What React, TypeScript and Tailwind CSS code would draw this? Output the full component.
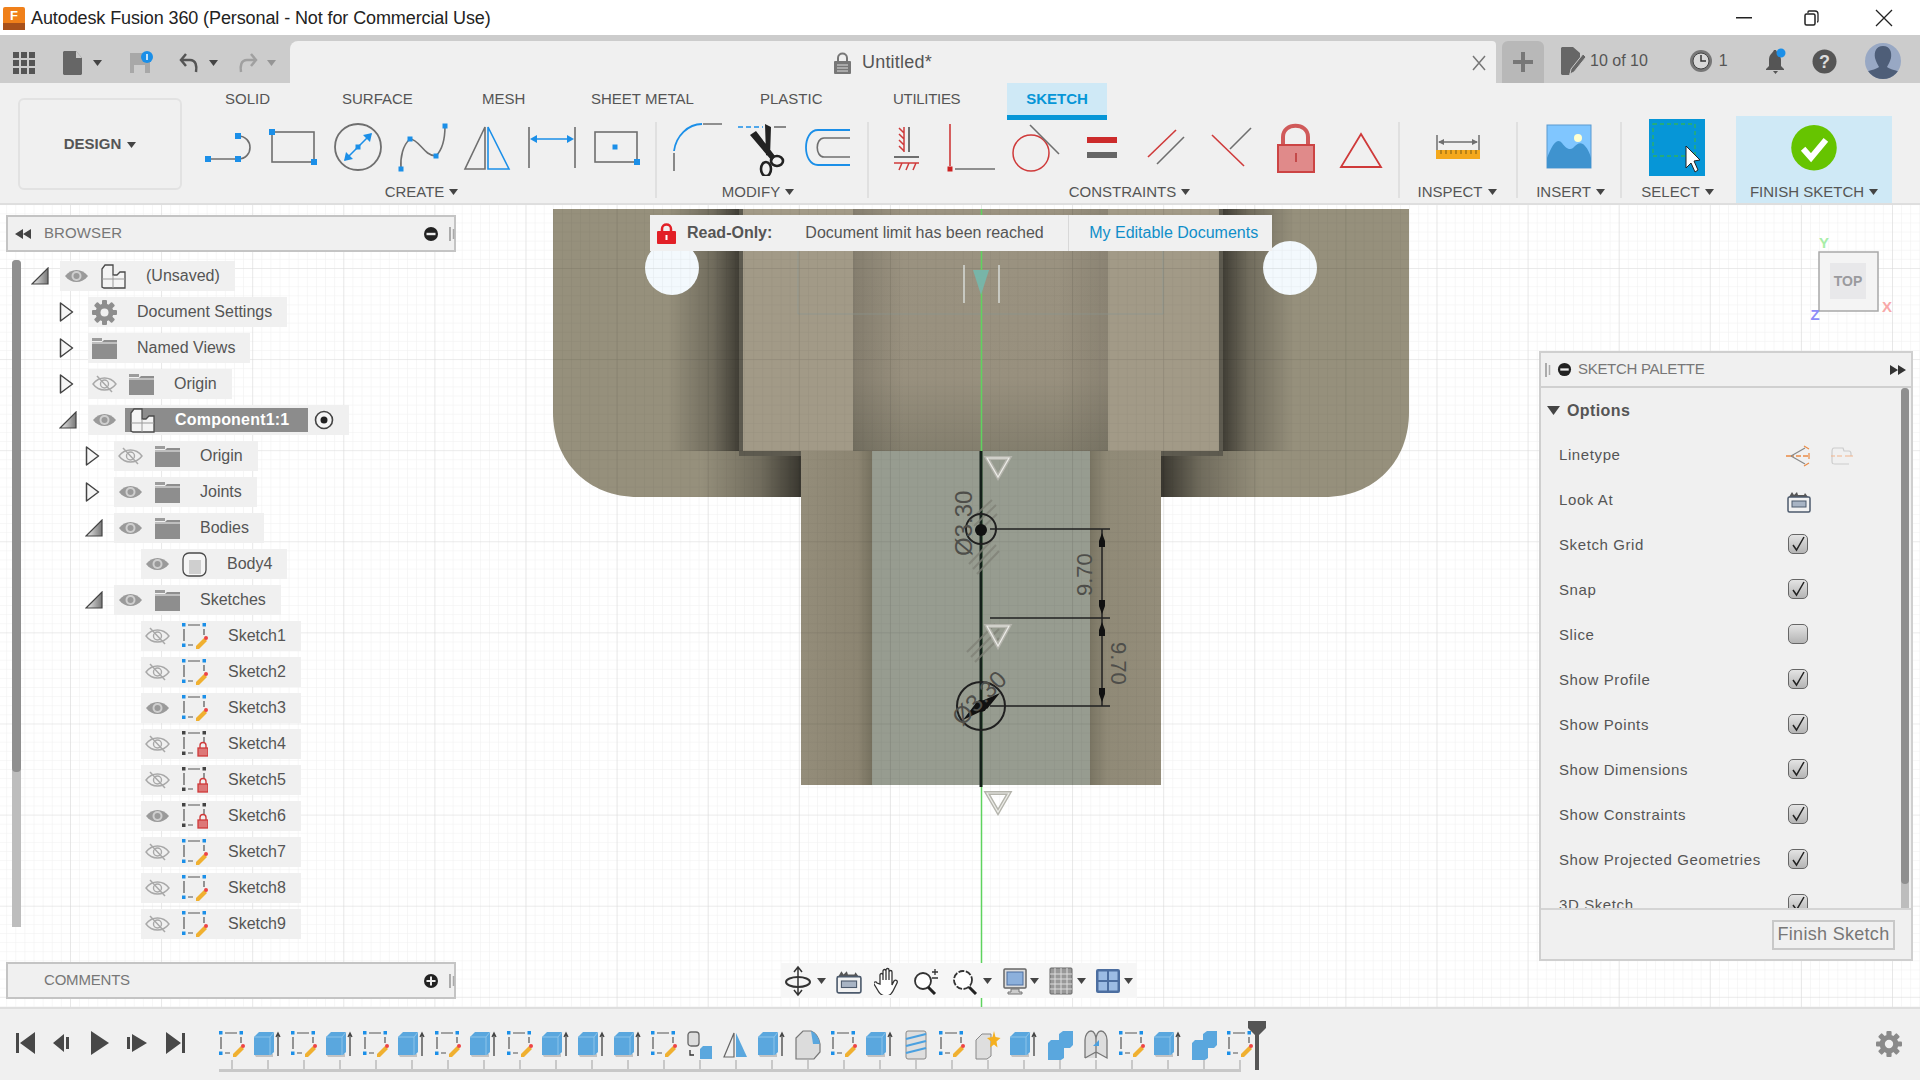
import type { ReactNode } from 'react';

const BLUE = '#0696d7';
const DOT = '#1b8fe8';
const RED = '#cf3a3a';
const GREY = '#6f6f6f';

function Caret({ className = '' }: { className?: string }) {
  return (
    <svg width="9" height="6" viewBox="0 0 9 6" className={`shrink-0 ${className}`}>
      <path d="M0 0h9L4.5 6z" fill="#444" />
    </svg>
  );
}

function Tool({ x, w = 65, children }: { x: number; w?: number; children: ReactNode }) {
  return (
    <svg viewBox={`${x} 116 ${w} 60`} width={w} height={60} className="shrink-0" fill="none">
      {children}
    </svg>
  );
}

function Pt({ x, y, s = 7, c = DOT }: { x: number; y: number; s?: number; c?: string }) {
  return <rect x={x - s / 2} y={y - s / 2} width={s} height={s} fill={c} />;
}

function Group({
  w,
  pl,
  label,
  lbl = 'pr-[8px]',
  children,
}: {
  w: string;
  pl: string;
  label: string;
  lbl?: string;
  children: ReactNode;
}) {
  return (
    <div className={`flex shrink-0 flex-col ${w}`}>
      <div className={`flex h-[60px] ${pl}`}>{children}</div>
      <div className={`flex h-[29px] items-center justify-center gap-[5px] pt-[5px] text-[15px] text-[#555] ${lbl}`}>
        {label}
        <Caret />
      </div>
    </div>
  );
}

function Sep() {
  return <div className="mt-[6px] h-[76px] w-[2px] shrink-0 bg-[#e0e0e0]" />;
}

function Eye({ off = false }: { off?: boolean }) {
  const c = off ? '#a8a8a8' : '#9a9a9a';
  return (
    <svg width="25" height="18" viewBox="0 0 25 18" className="shrink-0">
      {off ? (
        <>
          <path d="M1 9c6-8 17-8 23 0-6 8-17 8-23 0z" fill="none" stroke={c} strokeWidth="1.4" />
          <circle cx="12.5" cy="9" r="4" fill="none" stroke={c} strokeWidth="1.4" />
          <path d="M5 1l15 16" stroke={c} strokeWidth="1.5" />
        </>
      ) : (
        <>
          <path d="M1 9c6-8 17-8 23 0-6 8-17 8-23 0z" fill={c} />
          <circle cx="12.5" cy="9" r="5" fill="#cfcfcf" />
          <circle cx="12.5" cy="9" r="3" fill={c} />
        </>
      )}
    </svg>
  );
}

function Folder() {
  return (
    <svg width="25" height="21" viewBox="0 0 25 21" className="shrink-0">
      <path d="M0 0h10v3H0z" fill="#9c9c9c" />
      <path d="M0 4h10l2-2h13v19H0z" fill="#8e8e8e" />
      <path d="M0 5h25" stroke="#f0f0f0" strokeWidth="1" />
    </svg>
  );
}

function CompIcon() {
  return (
    <svg width="25" height="25" viewBox="0 0 25 25" className="shrink-0">
      <path d="M1 5l3-4h8v10h4l3-3h5v16H3l-2-1z" fill="#f4f4f4" stroke="#4a4a4a" strokeWidth="1.3" />
      <path d="M1 15h11v9M12 11v4M12 15h12" fill="none" stroke="#9a9a9a" strokeWidth="1" />
    </svg>
  );
}

function BodyIcon() {
  return (
    <svg width="25" height="25" viewBox="0 0 25 25" className="shrink-0">
      <rect x="1" y="1" width="23" height="23" rx="6" fill="#f5f5f5" stroke="#4a4a4a" strokeWidth="1.3" />
      <rect x="7" y="8" width="12" height="14" fill="#cfcfcf" />
    </svg>
  );
}

function Gear({ size = 25, color = '#8e8e8e' }: { size?: number; color?: string }) {
  const teeth = [0, 45, 90, 135];
  return (
    <svg width={size} height={size} viewBox="0 0 25 25" className="shrink-0">
      {teeth.map((a) => (
        <rect key={a} x="10" y="0" width="5" height="25" rx="1" fill={color} transform={`rotate(${a} 12.5 12.5)`} />
      ))}
      <circle cx="12.5" cy="12.5" r="9" fill={color} />
      <circle cx="12.5" cy="12.5" r="4" fill="#f0f0f0" />
    </svg>
  );
}

function SketchIcon({ locked = false }: { locked?: boolean }) {
  const c = locked ? '#444' : DOT;
  return (
    <svg width="26" height="28" viewBox="0 0 26 28" className="shrink-0" fill="none">
      <path d="M6 3h12M2 7v12M22 7v6M6 23h5" stroke="#555" strokeWidth="1.2" />
      <rect x="0" y="1" width="3.5" height="3.5" fill={c} />
      <rect x="20.5" y="1" width="3.5" height="3.5" fill={c} />
      <rect x="0" y="21.5" width="3.5" height="3.5" fill={c} />
      {locked ? (
        <g>
          <path d="M18 18v-2.500a3 3 0 0 1 6 0V18" stroke={RED} strokeWidth="1.4" />
          <rect x="16" y="18" width="10" height="8" fill="#dd7777" stroke={RED} strokeWidth="1.3" />
        </g>
      ) : (
        <g>
          <path d="M14 24l8-8 3 3-8 8h-3z" fill="#f0b030" />
          <circle cx="24" cy="16" r="2" fill="#ee4444" />
        </g>
      )}
    </svg>
  );
}

function ExtrudeIcon() {
  return (
    <svg width="28" height="30" viewBox="0 0 28 30" className="shrink-0" fill="none">
      <path d="M0 24l2 3h17v-3z" fill="#c4c4c4" />
      <path d="M0 7l5-5h15v20l-3 3H0z" fill="#5aa7de" />
      <path d="M0 7h16v18M16 7l4-5" stroke="#8cc4ea" strokeWidth="1" />
      <path d="M24 26V4M22 7l2-4 2 4" stroke="#444" strokeWidth="1.3" />
    </svg>
  );
}

function CombineIcon() {
  return (
    <svg width="26" height="30" viewBox="0 0 26 30" className="shrink-0">
      <path d="M12 4l4-3h10v14l-3 3h-6v10l-3 2H1V13l3-3h8z" fill="#5aa7de" />
    </svg>
  );
}

type Step = 'sk' | 'ex' | 'joint' | 'mirror' | 'shape' | 'coil' | 'new' | 'comb' | 'loft';

function TimelineGlyph({ step }: { step: Step }) {
  if (step === 'sk') return <SketchIcon />;
  if (step === 'ex') return <ExtrudeIcon />;
  if (step === 'comb') return <CombineIcon />;
  if (step === 'joint')
    return (
      <svg width="26" height="30" viewBox="0 0 26 30" fill="none">
        <rect x="1" y="2" width="11" height="14" rx="3" fill="#ddd" stroke="#666" strokeWidth="1.3" />
        <path d="M3 20v5h4" stroke="#333" strokeWidth="1.3" />
        <path d="M13 19l3-3h9v13H13z" fill="#5aa7de" />
      </svg>
    );
  if (step === 'mirror')
    return (
      <svg width="26" height="30" viewBox="0 0 26 30" fill="none">
        <path d="M11 3L1 27h10z" stroke="#666" strokeWidth="1.2" fill="#f0f0f0" />
        <path d="M13 3l11 24H13z" fill="#5aa7de" />
      </svg>
    );
  if (step === 'shape')
    return (
      <svg width="26" height="30" viewBox="0 0 26 30">
        <path d="M1 8l7-7h8c5 2 8 7 9 13v8l-6 7H1z" fill="#dcdcdc" stroke="#777" strokeWidth="1.2" />
        <path d="M16 1c5 2 8 7 9 13h-7z" fill="#5aa7de" />
      </svg>
    );
  if (step === 'coil')
    return (
      <svg width="24" height="30" viewBox="0 0 24 30" fill="none">
        <rect x="2" y="1" width="20" height="28" rx="2" fill="#dedede" stroke="#888" />
        <path d="M2 9l20-5M2 16l20-5M2 23l20-5" stroke="#4aa0e0" strokeWidth="2.200" />
      </svg>
    );
  if (step === 'new')
    return (
      <svg width="26" height="30" viewBox="0 0 26 30">
        <path d="M1 10l6-6h9v22l-4 3H1z" fill="#dedede" stroke="#888" />
        <path d="M19 1l1.500 6 5 1-4 3.500 1 6-3.500-3-4 3 1-6-4-3.500 5.500-1z" fill="#f5b020" />
      </svg>
    );
  return (
    <svg width="26" height="30" viewBox="0 0 26 30" fill="none">
      <path d="M2 28V10c0-5 3-9 6-9s5 4 5 9v18M13 10c0-5 2-9 5-9s6 4 6 9v18l-11-6-11 6" fill="#ddd" stroke="#777" strokeWidth="1.3" />
      <path d="M10 16l6-6v6z" fill="#4aa0e0" />
    </svg>
  );
}

type Row = {
  level: 0 | 1 | 2 | 3;
  arrow?: 'open' | 'closed';
  eye?: 'on' | 'off';
  icon: 'comp' | 'folder' | 'gear' | 'body' | 'sketch' | 'lock';
  label: string;
  selected?: boolean;
};

const rows: Row[] = [
  { level: 0, arrow: 'open', eye: 'on', icon: 'comp', label: '(Unsaved)' },
  { level: 1, arrow: 'closed', icon: 'gear', label: 'Document Settings' },
  { level: 1, arrow: 'closed', icon: 'folder', label: 'Named Views' },
  { level: 1, arrow: 'closed', eye: 'off', icon: 'folder', label: 'Origin' },
  { level: 1, arrow: 'open', eye: 'on', icon: 'comp', label: 'Component1:1', selected: true },
  { level: 2, arrow: 'closed', eye: 'off', icon: 'folder', label: 'Origin' },
  { level: 2, arrow: 'closed', eye: 'on', icon: 'folder', label: 'Joints' },
  { level: 2, arrow: 'open', eye: 'on', icon: 'folder', label: 'Bodies' },
  { level: 3, eye: 'on', icon: 'body', label: 'Body4' },
  { level: 2, arrow: 'open', eye: 'on', icon: 'folder', label: 'Sketches' },
  { level: 3, eye: 'off', icon: 'sketch', label: 'Sketch1' },
  { level: 3, eye: 'off', icon: 'sketch', label: 'Sketch2' },
  { level: 3, eye: 'on', icon: 'sketch', label: 'Sketch3' },
  { level: 3, eye: 'off', icon: 'lock', label: 'Sketch4' },
  { level: 3, eye: 'off', icon: 'lock', label: 'Sketch5' },
  { level: 3, eye: 'on', icon: 'lock', label: 'Sketch6' },
  { level: 3, eye: 'off', icon: 'sketch', label: 'Sketch7' },
  { level: 3, eye: 'off', icon: 'sketch', label: 'Sketch8' },
  { level: 3, eye: 'off', icon: 'sketch', label: 'Sketch9' },
];

const indent = ['ml-0', 'ml-[28px]', 'ml-[54px]', 'ml-[81px]'];

function RowIcon({ icon }: { icon: Row['icon'] }) {
  if (icon === 'comp') return <CompIcon />;
  if (icon === 'folder') return <Folder />;
  if (icon === 'gear') return <Gear />;
  if (icon === 'body') return <BodyIcon />;
  return <SketchIcon locked={icon === 'lock'} />;
}

function Arrow({ kind }: { kind?: Row['arrow'] }) {
  return (
    <div className="flex w-[29px] shrink-0 items-center">
      {kind === 'open' && (
        <svg width="18" height="18" viewBox="0 0 18 18">
          <defs>
            <linearGradient id="tri" x1="0" x2="1" y1="0" y2="0">
              <stop offset="0" stopColor="#f0f0f0" />
              <stop offset="1" stopColor="#777" />
            </linearGradient>
          </defs>
          <path d="M1 17L17 1v16z" fill="url(#tri)" stroke="#444" strokeWidth="1.2" />
        </svg>
      )}
      {kind === 'closed' && (
        <svg width="15" height="20" viewBox="0 0 15 20">
          <path d="M1.500 1v18L13.500 10z" fill="#f6f6f6" stroke="#444" strokeWidth="1.5" strokeLinejoin="round" />
        </svg>
      )}
    </div>
  );
}

function TreeRow({ row }: { row: Row }) {
  return (
    <div className={`flex h-[36px] items-center ${indent[row.level]}`}>
      <Arrow kind={row.arrow} />
      <div className="flex h-[30px] items-center bg-[#f0f0f0] pl-[4px] pr-[15px] text-[16px] text-[#555]">
        {row.eye && (
          <div className="mr-[8px] shrink-0">
            <Eye off={row.eye === 'off'} />
          </div>
        )}
        {row.selected ? (
          <>
            <div className="flex h-[24px] w-[183px] items-center bg-[#8c8c8c] pl-[5px] font-bold tracking-[0.2px] text-white">
              <CompIcon />
              <span className="ml-[20px]">{row.label}</span>
            </div>
            <svg width="20" height="20" viewBox="0 0 20 20" className="ml-[6px]">
              <circle cx="10" cy="10" r="8.500" fill="#f5f5f5" stroke="#444" strokeWidth="1.6" />
              <circle cx="10" cy="10" r="3.500" fill="#222" />
            </svg>
          </>
        ) : (
          <>
            <div className={row.eye ? 'ml-[4px]' : ''}>
              <RowIcon icon={row.icon} />
            </div>
            <span className="ml-[20px] whitespace-nowrap">{row.label}</span>
          </>
        )}
      </div>
    </div>
  );
}

function Check({ on = true }: { on?: boolean }) {
  return (
    <div className="mb-[4px] flex h-[20px] w-[20px] items-center justify-center rounded-[5px] border border-[#666] bg-[linear-gradient(#e4e4e4,#b4b4b4)]">
      {on && (
        <svg width="15" height="16" viewBox="0 0 15 16" fill="none">
          <path d="M2 9l3.500 5L13 1" stroke="#222" strokeWidth="1.500" />
        </svg>
      )}
    </div>
  );
}

const options: { label: string; on?: boolean }[] = [
  { label: 'Sketch Grid', on: true },
  { label: 'Snap', on: true },
  { label: 'Slice', on: false },
  { label: 'Show Profile', on: true },
  { label: 'Show Points', on: true },
  { label: 'Show Dimensions', on: true },
  { label: 'Show Constraints', on: true },
  { label: 'Show Projected Geometries', on: true },
  { label: '3D Sketch', on: true },
];

function PaletteRow({ label, children }: { label: string; children: ReactNode }) {
  return (
    <div className="flex h-[45px] shrink-0 items-center pl-[18px]">
      <div className="w-[229px] text-[15px] tracking-[0.6px] text-[#555]">{label}</div>
      {children}
    </div>
  );
}

function LookAt({ size = 24 }: { size?: number }) {
  return (
    <svg width={size} height={size} viewBox="0 0 24 24" fill="none" className="shrink-0">
      <path d="M2 8l3-5 2 3 3-3 1 3h6l1-2 3 4" fill="#555" />
      <rect x="1" y="8" width="22" height="15" rx="1.500" fill="#f2f2f2" stroke="#4c5a6c" strokeWidth="1.500" />
      <rect x="5" y="12" width="14" height="6" fill="#a8b4c4" stroke="#4c5a6c" />
    </svg>
  );
}

function Canvas() {
  return (
    <svg viewBox="0 205 1920 802" className="absolute inset-0 h-full w-full bg-white">
      <defs>
        <pattern id="minor" x="70" y="268" width="9.11" height="9.11" patternUnits="userSpaceOnUse">
          <path d="M0 0H9.110M0 0V9.110" stroke="rgba(0,0,0,0.06)" strokeWidth="1" fill="none" />
        </pattern>
        <pattern id="major" x="70" y="268" width="91.100" height="91.100" patternUnits="userSpaceOnUse">
          <path d="M0 0H91.100M0 0V91.100" stroke="rgba(0,0,0,0.1)" strokeWidth="1.200" fill="none" />
        </pattern>
        <linearGradient id="toDark" x1="0" x2="1" y1="0" y2="0">
          <stop offset="0" stopColor="#000" stopOpacity="0" />
          <stop offset="0.6" stopColor="#000" stopOpacity="0.25" />
          <stop offset="1" stopColor="#000" stopOpacity="0.62" />
        </linearGradient>
        <linearGradient id="fromDark" x1="0" x2="1" y1="0" y2="0">
          <stop offset="0" stopColor="#000" stopOpacity="0.62" />
          <stop offset="0.4" stopColor="#000" stopOpacity="0.25" />
          <stop offset="1" stopColor="#000" stopOpacity="0" />
        </linearGradient>
        <linearGradient id="mid" x1="0" x2="0" y1="0" y2="1">
          <stop offset="0" stopColor="#9b9381" />
          <stop offset="0.7" stopColor="#98907e" />
          <stop offset="1" stopColor="#837e6d" />
        </linearGradient>
        <linearGradient id="midX" x1="0" x2="1" y1="0" y2="0">
          <stop offset="0" stopColor="#000" stopOpacity="0.14" />
          <stop offset="0.2" stopColor="#000" stopOpacity="0" />
          <stop offset="0.8" stopColor="#000" stopOpacity="0" />
          <stop offset="1" stopColor="#000" stopOpacity="0.1" />
        </linearGradient>
        <linearGradient id="lowL" x1="0" x2="1" y1="0" y2="0">
          <stop offset="0" stopColor="#948d7a" />
          <stop offset="0.8" stopColor="#8c8572" />
          <stop offset="1" stopColor="#76715f" />
        </linearGradient>
        <linearGradient id="lowR" x1="0" x2="1" y1="0" y2="0">
          <stop offset="0" stopColor="#7a7563" />
          <stop offset="0.25" stopColor="#908a77" />
          <stop offset="1" stopColor="#948d7a" />
        </linearGradient>
        <clipPath id="plate">
          <path d="M553 209H1409V412c0 50-35 85-85 85H638c-50 0-85-35-85-85z" />
        </clipPath>
      </defs>

      <rect x="0" y="205" width="1920" height="802" fill="#fff" />
      <g clipPath="url(#plate)">
        <rect x="553" y="209" width="856" height="288" fill="#96907c" />
        <rect x="668" y="209" width="75" height="242" fill="url(#toDark)" />
        <rect x="1219" y="209" width="75" height="242" fill="url(#fromDark)" />
        <rect x="700" y="451" width="101" height="46" fill="url(#toDark)" />
        <rect x="1161" y="451" width="101" height="46" fill="url(#fromDark)" />
      </g>
      <circle cx="672" cy="268" r="27" fill="#f3f9fd" />
      <circle cx="1290" cy="268" r="27" fill="#f3f9fd" />

      <rect x="739" y="209" width="484" height="247" fill="#5d5a4f" />
      <rect x="743" y="209" width="476" height="242" fill="#a29a87" />
      <rect x="853" y="209" width="255" height="242" fill="url(#mid)" />
      <rect x="853" y="209" width="255" height="242" fill="url(#midX)" />
      <path d="M798 314H1163M798 314V250M1163 314V250" stroke="#8e9b95" strokeWidth="1" fill="none" opacity="0.7" />

      <rect x="801" y="451" width="71" height="334" fill="url(#lowL)" />
      <rect x="1090" y="451" width="71" height="334" fill="url(#lowR)" />
      <rect x="872" y="451" width="218" height="334" fill="#979c90" />

      <rect x="0" y="205" width="1920" height="802" fill="url(#minor)" />
      <rect x="0" y="205" width="1920" height="802" fill="url(#major)" />

      <path d="M981.500 209V1007" stroke="#5fd35f" strokeWidth="1.500" />
      <path d="M964 265V303M999 265V303" stroke="#d8dcd8" strokeWidth="1.500" />
      <path d="M973 270H989L981 295z" fill="#78b5a8" />

      <path d="M981 451V787" stroke="#14201a" strokeWidth="3" />

      <g stroke="#7f8076" strokeWidth="2" fill="none" opacity="0.75">
        <path d="M970 520l22-20M974 526l22-21M978 532l19-18M969 564l23-24M973 569l23-24M977 574l22-23" />
        <path d="M967 652l28-28M971 657l28-28M975 662l24-24" />
      </g>

      <g stroke="#202020" fill="none">
        <circle cx="981" cy="529" r="15" strokeWidth="2" />
        <circle cx="981" cy="706" r="24" strokeWidth="2" />
        <path d="M990 529H1110M990 618H1110M990 706H1110M1102 529V706" strokeWidth="1.500" />
      </g>
      <circle cx="981" cy="530" r="6" fill="#111" />
      <circle cx="981" cy="706" r="6" fill="#111" />
      <path d="M963 720L976 703 986 709zM1000 693L987 709 977 703z" fill="#111" />
      <g fill="#111">
        <path d="M1102 533l-3 8v6h6v-6z" />
        <path d="M1102 614l-3-8v-6h6v6z" />
        <path d="M1102 622l-3 8v6h6v-6z" />
        <path d="M1102 702l-3-8v-6h6v6z" />
      </g>

      <g stroke="#b4b4ac" strokeWidth="4" fill="none">
        <path d="M987 458H1009L998 477z" />
        <path d="M987 626H1009L998 646z" />
        <path d="M987 793H1009L998 812z" />
      </g>
      <g stroke="#ecece8" strokeWidth="1.200" fill="none">
        <path d="M987 458H1009L998 477z" />
        <path d="M987 626H1009L998 646z" />
        <path d="M987 793H1009L998 812z" />
      </g>

      <g fill="#4e4e4a" fontSize="22" fontFamily="'Liberation Sans', sans-serif">
        <text transform="translate(1092 596) rotate(-90)">9.70</text>
        <text transform="translate(1111 642) rotate(90)">9.70</text>
        <text fontSize="24" transform="translate(972 556) rotate(-90)">Ø3.30</text>
        <text fontSize="24" transform="translate(962 727) rotate(-45)">Ø3.30</text>
      </g>

      <rect x="1819" y="252" width="59" height="59" fill="#f4f4f4" stroke="#a8a8a8" strokeWidth="1.500" />
      <rect x="1830" y="263" width="36" height="36" fill="#e8e8ea" />
      <text x="1848" y="286" textAnchor="middle" fontSize="14" fontWeight="700" fill="#9a9a9e" fontFamily="'Liberation Sans', sans-serif">TOP</text>
      <text x="1824" y="248" textAnchor="middle" fontSize="15" fontWeight="700" fill="#a8eea8" fontFamily="'Liberation Sans', sans-serif">Y</text>
      <text x="1887" y="312" textAnchor="middle" fontSize="15" fontWeight="700" fill="#f8a8a8" fontFamily="'Liberation Sans', sans-serif">X</text>
      <text x="1815" y="320" textAnchor="middle" fontSize="15" fontWeight="700" fill="#8c8cf8" fontFamily="'Liberation Sans', sans-serif">Z</text>
    </svg>
  );
}

function PanelHandle({ className = '' }: { className?: string }) {
  return (
    <svg width="8" height="16" viewBox="0 0 8 16" className={`shrink-0 ${className}`}>
      <path d="M2 1V15" stroke="#666" strokeWidth="1" />
      <path d="M5.500 3V13" stroke="#aaa" strokeWidth="1.500" />
    </svg>
  );
}

function Browser() {
  return (
    <div className="absolute left-[6px] top-[10px] w-[450px]">
      <div className="flex h-[37px] items-center border-2 border-[#c4c4c4] bg-[#f0f0f0] pl-[7px] text-[15px] tracking-[0.1px] text-[#777]">
        <svg width="16" height="10" viewBox="0 0 16 10" className="mr-[13px]">
          <path d="M0 5l8-5v10zM8 5l8-5v10z" fill="#444" />
        </svg>
        BROWSER
        <svg width="16" height="16" viewBox="0 0 16 16" className="ml-auto mr-[9px]">
          <circle cx="8" cy="8" r="7" fill="#222" />
          <rect x="3.500" y="6.800" width="9" height="2.400" fill="#eee" />
        </svg>
        <PanelHandle className="-mr-[2px]" />
      </div>
      <div className="relative mt-[6px] pl-[25px]">
        <div className="absolute left-[6px] top-[2px] h-[667px] w-[9px] rounded-t-[4px] bg-[#bdbdbd]">
          <div className="h-[512px] w-full rounded-[4px] bg-[#8f8f8f]" />
        </div>
        {rows.map((r) => (
          <TreeRow key={r.label + r.level + r.eye} row={r} />
        ))}
      </div>
    </div>
  );
}

function Comments() {
  return (
    <div className="absolute left-[6px] top-[757px] flex h-[37px] w-[450px] items-center border-2 border-[#c4c4c4] bg-[#f0f0f0] pl-[36px] text-[15px] tracking-[-0.2px] text-[#777]">
      COMMENTS
      <svg width="16" height="16" viewBox="0 0 16 16" className="ml-auto mr-[9px]">
        <circle cx="8" cy="8" r="7" fill="#222" />
        <path d="M3.500 8h9M8 3.500v9" stroke="#eee" strokeWidth="2" />
      </svg>
      <PanelHandle className="-mr-[2px]" />
    </div>
  );
}

function Palette() {
  return (
    <div className="absolute left-[1539px] top-[146px] flex h-[610px] w-[374px] flex-col border-2 border-[#cfcfcf] bg-[#f0f0f0]">
      <div className="flex h-[35px] shrink-0 items-center border-b-2 border-[#d0d0d0] pl-[3px] pr-[5px] text-[15px] tracking-[-0.3px] text-[#777]">
        <PanelHandle />
        <svg width="15" height="15" viewBox="0 0 16 16" className="ml-[5px] mr-[6px]">
          <circle cx="8" cy="8" r="7" fill="#222" />
          <rect x="3.500" y="6.800" width="9" height="2.400" fill="#eee" />
        </svg>
        SKETCH PALETTE
        <svg width="16" height="10" viewBox="0 0 16 10" className="ml-auto">
          <path d="M0 0l8 5-8 5zM8 0l8 5-8 5z" fill="#333" />
        </svg>
      </div>
      <div className="relative flex h-[520px] shrink-0 flex-col overflow-hidden">
        <div className="flex h-[45px] shrink-0 items-center gap-[7px] pl-[6px] text-[16px] font-bold tracking-[0.4px] text-[#555]">
          <svg width="13" height="9" viewBox="0 0 13 9">
            <path d="M0 0h13L6.500 9z" fill="#444" />
          </svg>
          Options
        </div>
        <PaletteRow label="Linetype">
          <svg width="80" height="26" viewBox="0 0 80 24" fill="none" className="-ml-[3px]">
            <path d="M1 12h8M11 12h5M18 12h5" stroke="#ea8a45" strokeWidth="1.500" />
            <path d="M6 12L20 4M6 12l14 8" stroke="#888" strokeWidth="1.200" />
            <path d="M19 2l5 3M19 22l5-3M24 9v6" stroke="#ea8a45" strokeWidth="1.200" />
            <path d="M49 4h9l1 3h5c2 0 2 1 2 3v2M49 4c-2 0-2 2-2 4v9c0 3 1 3 3 3h14" stroke="#ccc" strokeWidth="1.200" />
            <path d="M46 12h4M52 12h5M60 12h8" stroke="#f2b48c" strokeWidth="1.200" />
          </svg>
        </PaletteRow>
        <PaletteRow label="Look At">
          <div className="-ml-[1px]">
            <LookAt />
          </div>
        </PaletteRow>
        {options.map((o) => (
          <PaletteRow key={o.label} label={o.label}>
            <Check on={o.on} />
          </PaletteRow>
        ))}
        <div className="absolute right-[2px] top-0 h-full w-[8px] rounded-t-[4px] bg-[#bdbdbd]">
          <div className="h-[496px] w-full rounded-[4px] bg-[#8f8f8f]" />
        </div>
      </div>
      <div className="flex flex-1 items-center justify-end border-t-2 border-[#d4d4d4] pr-[16px]">
        <div className="flex h-[30px] w-[123px] items-center justify-center border-2 border-[#c8c8c8] text-[18px] tracking-[0.3px] text-[#777]">
          Finish Sketch
        </div>
      </div>
    </div>
  );
}

function NavBar() {
  return (
    <div className="absolute left-[781px] top-[758px] flex h-[35px] w-[356px] items-center bg-[#f6f6f6] pl-[5px]">
      <svg width="28" height="32" viewBox="0 0 28 32" fill="none" className="ml-[-2px]">
        <path d="M14 2v28M10 7l4-5 4 5M10 25l4 5 4-5" stroke="#333" strokeWidth="1.500" />
        <ellipse cx="14" cy="17" rx="12" ry="5" stroke="#333" strokeWidth="2" />
      </svg>
      <Caret className="ml-[5px]" />
      <div className="ml-[10px]">
        <LookAt size={26} />
      </div>
      <svg width="26" height="28" viewBox="0 0 26 28" fill="none" className="ml-[12px]">
        <path d="M6 17V8c0-2 3-2 3 0v5-9c0-2 3-2 3 0v9-10c0-2 3-2 3 0v10-8c0-2 3-2 3 0v13l2-4c2-2 4 0 3 2l-4 8c-2 4-4 5-7 5-5 0-7-3-9-7l-3-5c-1-2 2-3 3-1z" fill="#fff" stroke="#333" strokeWidth="1.300" />
      </svg>
      <svg width="26" height="28" viewBox="0 0 26 28" fill="none" className="ml-[13px]">
        <circle cx="10" cy="14" r="8" fill="#fff" stroke="#333" strokeWidth="1.800" />
        <path d="M15 20l7 7" stroke="#222" strokeWidth="3" />
        <path d="M19 5h6M22 2v6M19 11h6" stroke="#333" strokeWidth="1.300" />
      </svg>
      <svg width="26" height="28" viewBox="0 0 26 28" fill="none" className="ml-[13px]">
        <circle cx="11" cy="13" r="9" fill="#fff" stroke="#333" strokeWidth="1.800" strokeDasharray="6 1.500" />
        <path d="M17 20l7 7" stroke="#222" strokeWidth="3" />
      </svg>
      <Caret className="ml-[5px]" />
      <svg width="24" height="28" viewBox="0 0 24 28" fill="none" className="ml-[11px]">
        <rect x="1" y="2" width="22" height="19" rx="1" fill="#ddd" stroke="#666" strokeWidth="1.500" />
        <rect x="4" y="5" width="16" height="13" fill="#8cb0dc" stroke="#4c6ea0" />
        <path d="M8 22h8v3h3v2H5v-2h3z" fill="#ccc" stroke="#777" />
      </svg>
      <Caret className="ml-[3px]" />
      <svg width="24" height="28" viewBox="0 0 24 28" fill="none" className="ml-[10px]">
        <rect x="1" y="1" width="22" height="26" rx="1" fill="#999" stroke="#666" />
        <path d="M1 7h22M1 12h22M1 17h22M1 22h22M6 1v26M12 1v26M18 1v26" stroke="#ddd" strokeWidth="1" />
      </svg>
      <Caret className="ml-[4px]" />
      <svg width="24" height="24" viewBox="0 0 24 24" className="ml-[10px]">
        <rect x="0" y="0" width="24" height="24" rx="2" fill="#4c6ea0" />
        <rect x="2.500" y="2.500" width="8.500" height="8.500" fill="#9cbce4" />
        <rect x="13" y="2.500" width="8.500" height="8.500" fill="#9cbce4" />
        <rect x="2.500" y="13" width="8.500" height="8.500" fill="#9cbce4" />
        <rect x="13" y="13" width="8.500" height="8.500" fill="#9cbce4" />
      </svg>
      <Caret className="ml-[4px]" />
    </div>
  );
}

const steps: Step[] = [
  'sk', 'ex', 'sk', 'ex', 'sk', 'ex', 'sk', 'ex', 'sk', 'ex', 'ex', 'ex', 'sk', 'joint', 'mirror',
  'ex', 'shape', 'sk', 'ex', 'coil', 'sk', 'new', 'ex', 'comb', 'loft', 'sk', 'ex', 'comb', 'sk',
];

function Timeline() {
  return (
    <div className="relative flex h-[73px] shrink-0 border-t-2 border-[#dedede] bg-[#f0f0f0]">
      <div className="flex h-full w-[214px] shrink-0 items-center pb-[2px] pl-[16px]">
        <svg width="170" height="24" viewBox="0 0 170 24" className="-mt-[2px]">
          <path d="M0 2h3v20H0zM19 1v22L4 12z" fill="#484848" />
          <path d="M37 12l11-9v18zM50 6h3v12h-3z" fill="#484848" />
          <path d="M75 0l18 12-18 12z" fill="#484848" />
          <path d="M111 6h3v12h-3zM116 3l15 9-15 9z" fill="#484848" />
          <path d="M150 1l15 11-15 11zM166 2h3v20h-3z" fill="#484848" />
        </svg>
      </div>
      <div className="flex w-[1044px] shrink-0 flex-col pt-[21px]">
        <div className="flex">
          {steps.map((s, i) => (
            <div key={i} className="flex w-[36px] shrink-0 flex-col items-center">
              <div className="flex h-[30px] items-start">
                <TimelineGlyph step={s} />
              </div>
              <div className="h-[9px] w-[2px] bg-[#c8c8c8]" />
            </div>
          ))}
        </div>
        <div className="ml-[5px] h-[3px] w-[1022px] bg-[#c8c8c8]" />
      </div>
      <svg width="20" height="50" viewBox="0 0 20 50" className="absolute left-[1247px] top-[12px]">
        <path d="M1 0h18v7l-7 7v35H8V14L1 7z" fill="#555" />
      </svg>
      <div className="ml-auto mr-[18px] flex items-center pb-[2px]">
        <Gear size={26} color="#8a8a8a" />
      </div>
    </div>
  );
}

function Ribbon() {
  const tabs = [
    ['SOLID', 'w-[117px]'],
    ['SURFACE', 'w-[140px]'],
    ['MESH', 'w-[109px]'],
    ['SHEET METAL', 'w-[169px]'],
    ['PLASTIC', 'w-[133px]'],
    ['UTILITIES', 'w-[114px] tracking-[-0.3px]'],
  ];
  return (
    <div className="flex h-[122px] shrink-0 border-b-2 border-[#dedede] bg-[#f0f0f0]">
      <div className="w-[196px] shrink-0 pl-[18px] pt-[15px]">
        <div className="flex h-[92px] w-[164px] items-center justify-center gap-[6px] rounded-[6px] border-2 border-[#e2e2e2] pt-[1px] text-[15px] font-bold text-[#555]">
          DESIGN
          <Caret />
        </div>
      </div>
      <div className="flex min-w-0 flex-1 flex-col">
        <div className="flex h-[33px] shrink-0 pl-[29px] text-[15px] text-[#555]">
          {tabs.map(([t, w]) => (
            <div key={t} className={`${w} pt-[5px]`}>
              {t}
            </div>
          ))}
          <div className="flex h-[37px] w-[100px] items-center justify-center border-b-[5px] border-[#0696d7] bg-[#cfe9f6] font-bold text-[#0696d7]">
            SKETCH
          </div>
        </div>
        <div className="flex h-[87px] shrink-0">
          <Group w="w-[459px]" pl="pl-0" label="CREATE">
            <Tool x={196}>
              <path d="M208 159H238M238 136c16 0 16 23 0 23" stroke={GREY} strokeWidth="1.600" />
              <Pt x={208} y={159} s={6} />
              <Pt x={238} y={159} s={6} />
              <Pt x={238} y={136} s={6} />
            </Tool>
            <Tool x={261}>
              <rect x="272" y="132" width="42" height="30" stroke={GREY} strokeWidth="1.600" />
              <Pt x={272} y={132} s={6} />
              <Pt x={314} y={162} s={6} />
            </Tool>
            <Tool x={326}>
              <circle cx="358" cy="147" r="23" stroke={GREY} strokeWidth="1.800" />
              <path d="M345 160L371 134" stroke={DOT} strokeWidth="1.600" />
              <path d="M344 161l9-2-7-7zM372 133l-9 2 7 7z" fill={DOT} />
              <Pt x={358} y={147} s={5} />
            </Tool>
            <Tool x={391}>
              <path d="M401 169c-1-12 2-24 9-30 9 0 14 17 26 17 6-6 9-18 9-30" stroke={GREY} strokeWidth="1.600" />
              <Pt x={401} y={169} s={5} />
              <Pt x={410} y={139} s={5} />
              <Pt x={436} y={156} s={5} />
              <Pt x={445} y={126} s={5} />
            </Tool>
            <Tool x={456}>
              <path d="M485 127L465 169H485z" stroke={GREY} strokeWidth="1.600" />
              <path d="M488 127L509 169H488z" stroke={DOT} strokeWidth="1.600" />
            </Tool>
            <Tool x={521}>
              <path d="M529 127V168M575 127V168" stroke={GREY} strokeWidth="1.600" />
              <path d="M533 139H571" stroke={DOT} strokeWidth="1.500" />
              <path d="M530 139l7-4v8zM574 139l-7-4v8z" fill={DOT} />
            </Tool>
            <Tool x={586}>
              <rect x="595" y="132" width="42" height="30" stroke={GREY} strokeWidth="1.600" />
              <Pt x={615} y={147} s={5} />
              <Pt x={637} y={162} s={6} />
            </Tool>
          </Group>
          <Sep />
          <Group w="w-[210px]" pl="pl-[8px]" label="MODIFY">
            <Tool x={665}>
              <path d="M674 151c2-15 14-27 28-27" stroke={DOT} strokeWidth="1.800" />
              <path d="M703 124H722M674 153V171" stroke={GREY} strokeWidth="1.600" />
            </Tool>
            <Tool x={730}>
              <path d="M738 127H763" stroke={DOT} strokeWidth="1.500" strokeDasharray="5 3" />
              <path d="M774 127H786" stroke={GREY} strokeWidth="1.600" />
              <path d="M765 124l6 3-1 30-4-2zM750 135l6-4 19 25-3 5z" fill="#222" />
              <ellipse cx="766" cy="169" rx="5" ry="7" stroke="#222" strokeWidth="2.600" />
              <ellipse cx="777" cy="161" rx="6" ry="5" stroke="#222" strokeWidth="2.600" />
            </Tool>
            <Tool x={795}>
              <path d="M850 130H818c-16 0-16 35 0 35H850" stroke={DOT} strokeWidth="1.800" />
              <path d="M850 138H824c-9 0-9 19 0 19H850" stroke={GREY} strokeWidth="1.600" />
            </Tool>
          </Group>
          <Sep />
          <Group w="w-[529px]" pl="pl-[5px]" label="CONSTRAINTS">
            <Tool x={874}>
              <path d="M909 127V152M894 157H919" stroke={GREY} strokeWidth="2" />
              <path d="M904 127V152M899 128l5 5M899 134l5 5M899 140l5 5M899 146l5 5" stroke={RED} strokeWidth="1.500" />
              <path d="M894 163H919M899 170l3-7M906 170l3-7M913 170l3-7" stroke={RED} strokeWidth="1.500" />
            </Tool>
            <Tool x={939}>
              <path d="M950 124V166" stroke={RED} strokeWidth="1.600" />
              <Pt x={950} y={169} s={5} c="#cc2222" />
              <path d="M955 169H995" stroke={GREY} strokeWidth="1.600" />
            </Tool>
            <Tool x={1003}>
              <circle cx="1030" cy="153" r="18" stroke={RED} strokeWidth="1.500" />
              <path d="M1029 125L1058 154" stroke={GREY} strokeWidth="1.600" />
            </Tool>
            <Tool x={1068}>
              <rect x="1086" y="137" width="30" height="6" fill="#cc2b2b" />
              <rect x="1086" y="152" width="30" height="6" fill="#666" />
            </Tool>
            <Tool x={1133}>
              <path d="M1147 157L1175 130" stroke={RED} strokeWidth="1.600" />
              <path d="M1156 164L1183 137" stroke={GREY} strokeWidth="1.600" />
            </Tool>
            <Tool x={1197}>
              <path d="M1210 135L1242 166" stroke={RED} strokeWidth="1.600" />
              <path d="M1228 149L1249 128" stroke={GREY} strokeWidth="1.600" />
            </Tool>
            <Tool x={1262}>
              <path d="M1281 145V137c0-15 25-15 25 0v8" stroke="#d05a5a" strokeWidth="4" />
              <rect x="1276" y="145" width="36" height="27" fill="#e08a8a" stroke="#cc4444" strokeWidth="2" />
              <path d="M1294 153V162" stroke="#b33" strokeWidth="1.500" />
            </Tool>
            <Tool x={1326}>
              <path d="M1358 134L1378 167H1338z" stroke={RED} strokeWidth="1.800" />
            </Tool>
          </Group>
          <Sep />
          <Group w="w-[116px]" pl="pl-[28px]" label="INSPECT" lbl="pr-[2px]">
            <Tool x={1428} w={60}>
              <path d="M1437 135V150M1479 135V150" stroke={GREY} strokeWidth="1.500" />
              <path d="M1439 142H1477" stroke={GREY} strokeWidth="1.300" />
              <path d="M1438 142l6-3v6zM1478 142l-6-3v6z" fill={GREY} />
              <rect x="1436" y="150" width="44" height="9" fill="#f4a81c" />
              <path d="M1441 150v4M1446 150v4M1451 150v4M1456 150v4M1461 150v4M1466 150v4M1471 150v4M1476 150v4" stroke="#7a5a10" strokeWidth="1" />
            </Tool>
          </Group>
          <Sep />
          <Group w="w-[102px]" pl="pl-[21px]" label="INSERT" lbl="pl-[3px]">
            <Tool x={1539} w={60}>
              <rect x="1547" y="125" width="44" height="43" fill="#80c6ff" stroke="#5a9ad0" strokeWidth="1" />
              <path d="M1547 158c6-16 11-20 15-15 3 4 7 8 11 5 5-6 9-6 12-2 3 3 5 8 6 12v10h-44z" fill="#3f93cf" />
              <circle cx="1578" cy="138" r="4" fill="#ffffd0" />
            </Tool>
          </Group>
          <Sep />
          <Group w="w-[114px]" pl="pl-[27px]" label="SELECT" lbl="pr-[3px]">
            <Tool x={1649} w={60}>
              <rect x="1649" y="119" width="56" height="57" fill={BLUE} />
              <rect x="1653" y="124" width="42" height="32" stroke="#2fb35f" strokeWidth="1.300" strokeDasharray="4 3" />
              <path d="M1686 146V168L1691 163L1695 172L1698 170L1694 161L1700 160z" fill="#fff" stroke="#222" strokeWidth="1" />
            </Tool>
          </Group>
          <div className="flex h-[87px] w-[156px] shrink-0 flex-col items-center bg-[#cfe9f6]">
            <svg width="48" height="48" viewBox="0 0 48 48" className="mt-[8px]">
              <circle cx="24" cy="24" r="23" fill="#66c400" />
              <path d="M13 25l8 9 15-18" fill="none" stroke="#fff" strokeWidth="6" />
            </svg>
            <div className="mt-[9px] flex items-center gap-[5px] text-[15px] text-[#555]">
              FINISH SKETCH
              <Caret />
            </div>
          </div>
        </div>
      </div>
    </div>
  );
}

function TabStrip() {
  return (
    <div className="flex h-[48px] shrink-0 bg-[#cccccc]">
      <div className="flex w-[290px] shrink-0 items-center pl-[13px] pt-[7px]">
        <svg width="22" height="22" viewBox="0 0 22 22">
          <path d="M0 0h6v6H0zM8 0h6v6H8zM16 0h6v6h-6zM0 8h6v6H0zM8 8h6v6H8zM16 8h6v6h-6zM0 16h6v6H0zM8 16h6v6H8zM16 16h6v6h-6z" fill="#555" />
        </svg>
        <svg width="20" height="24" viewBox="0 0 20 24" className="ml-[28px]">
          <path d="M1 0h12l6 7v16l-1 1H1l-1-1V1z" fill="#666" />
          <path d="M13 0v7h6" fill="#ccc" />
        </svg>
        <Caret className="ml-[10px]" />
        <svg width="24" height="24" viewBox="0 0 24 24" className="ml-[27px]">
          <path d="M1 2h15l5 5v15H1z" fill="#a8a8a8" />
          <rect x="5" y="14" width="11" height="8" fill="#ccc" />
          <circle cx="18" cy="6" r="6" fill="#1b8fe8" />
          <path d="M18 3v6" stroke="#fff" strokeWidth="1.500" />
        </svg>
        <svg width="21" height="20" viewBox="0 0 21 20" fill="none" className="ml-[26px]">
          <path d="M7 1L2 7l5 6" stroke="#555" strokeWidth="2.500" />
          <path d="M3 7h8c6 0 7 6 6 12" stroke="#555" strokeWidth="2.500" />
        </svg>
        <Caret className="ml-[9px]" />
        <svg width="21" height="20" viewBox="0 0 21 20" fill="none" className="ml-[19px]">
          <path d="M14 1l5 6-5 6" stroke="#a0a0a0" strokeWidth="2.500" />
          <path d="M18 7h-8c-6 0-7 6-6 12" stroke="#a0a0a0" strokeWidth="2.500" />
        </svg>
        <Caret className="ml-[9px] opacity-40" />
      </div>
      <div className="mt-[6px] flex w-[1206px] shrink-0 items-center rounded-tl-[8px] rounded-tr-[4px] bg-[#f0f0f0] pl-[544px] pt-[1px] text-[18px] text-[#555]">
        <svg width="17" height="22" viewBox="0 0 17 22" fill="none">
          <path d="M4 10V6c0-6 9-6 9 0v4" stroke="#777" strokeWidth="2" />
          <rect x="0" y="9" width="17" height="13" rx="1" fill="#777" />
          <path d="M3 13h11M3 16h11M3 19h11" stroke="#ddd" strokeWidth="1" />
        </svg>
        <span className="ml-[11px] tracking-[0.2px]">Untitled*</span>
        <svg width="14" height="16" viewBox="0 0 14 16" fill="none" className="ml-auto mr-[10px]">
          <path d="M1 1l12 14M13 1L1 15" stroke="#777" strokeWidth="1.500" />
        </svg>
      </div>
      <div className="ml-[6px] mt-[6px] flex w-[42px] shrink-0 items-center justify-center rounded-t-[6px] bg-[#b8b8b8]">
        <svg width="20" height="20" viewBox="0 0 20 20">
          <path d="M8 0h4v8h8v4h-8v8H8v-8H0V8h8z" fill="#777" />
        </svg>
      </div>
      <div className="flex min-w-0 flex-1 items-center pl-[17px] pt-[4px] text-[16px] text-[#555]">
        <svg width="26" height="28" viewBox="0 0 26 28">
          <path d="M1 0h11l7 6v5L9 26l-1 2H1l-1-1V1z" fill="#666" />
          <path d="M22 7l3 3-12 15-4 2 1-5z" fill="#666" stroke="#ccc" />
        </svg>
        <span className="ml-[3px] whitespace-nowrap">10 of 10</span>
        <svg width="24" height="24" viewBox="0 0 24 24" fill="none" className="ml-[41px]">
          <circle cx="12" cy="12" r="11" fill="#777" />
          <circle cx="12" cy="12" r="8" fill="#d8d8d8" stroke="#444" />
          <path d="M12 6v6h5" stroke="#333" strokeWidth="1.500" />
        </svg>
        <span className="ml-[6px]">1</span>
        <svg width="23" height="27" viewBox="0 0 23 27" className="ml-[36px]">
          <path d="M10 2h2c1 3 5 4 5 10v6l3 3v1H2v-1l3-3v-6c0-6 4-7 5-10z" fill="#555" />
          <path d="M9 23h5l-2.500 3z" fill="#555" />
          <circle cx="17" cy="5" r="4.500" fill="#1b8fe8" />
        </svg>
        <svg width="25" height="25" viewBox="0 0 25 25" className="ml-[25px]">
          <circle cx="12.500" cy="12.500" r="12" fill="#555" />
          <text x="12.500" y="19" textAnchor="middle" fontSize="18" fontWeight="700" fill="#ddd">?</text>
        </svg>
        <svg width="36" height="36" viewBox="0 0 36 36" className="ml-[28px] rounded-full">
          <rect width="36" height="36" fill="#98a8c4" />
          <path d="M18 3c7 0 9 6 8 12-1 4-3 7-4 9 4 3 10 3 14 6v6H0v-6c4-3 10-3 14-6-1-2-3-5-4-9-1-6 1-12 8-12z" fill="#4e5e78" />
        </svg>
      </div>
    </div>
  );
}

function TitleBar() {
  return (
    <div className="flex h-[35px] shrink-0 items-center bg-white pl-[3px] pt-[1px] text-[18px] text-[#222]">
      <svg width="22" height="23" viewBox="0 0 22 23">
        <rect width="22" height="23" rx="2" fill="#f0801a" />
        <rect y="16" width="22" height="7" fill="#a8501a" />
        <text x="11" y="13" textAnchor="middle" fontSize="13" fontWeight="700" fill="#fff">F</text>
      </svg>
      <span className="ml-[6px] whitespace-nowrap tracking-[-0.1px]">Autodesk Fusion 360 (Personal - Not for Commercial Use)</span>
      <svg width="16" height="2" viewBox="0 0 16 2" className="ml-auto">
        <rect width="16" height="1.500" fill="#222" />
      </svg>
      <svg width="16" height="16" viewBox="0 0 16 16" fill="none" className="ml-[52px]">
        <rect x="1" y="4" width="10" height="11" rx="1.500" stroke="#222" strokeWidth="1.500" />
        <path d="M4 3V2c0-1 1-1 1-1h6c2 0 3 1 3 3v7c0 1-1 1-1 1" stroke="#222" strokeWidth="1.300" />
      </svg>
      <svg width="18" height="18" viewBox="0 0 18 18" fill="none" className="ml-[55px] mr-[27px]">
        <path d="M1 1l16 16M17 1L1 17" stroke="#222" strokeWidth="1.300" />
      </svg>
    </div>
  );
}

export default function App() {
  return (
    <div className="flex h-screen w-[1920px] flex-col overflow-hidden bg-white font-['Liberation_Sans',sans-serif]">
      <TitleBar />
      <TabStrip />
      <Ribbon />
      <div className="relative min-h-0 flex-1 overflow-hidden">
        <Canvas />
        <div className="absolute left-[650px] top-[10px] flex h-[36px] w-[622px] items-center bg-[#f0f0f0] pl-[7px] text-[16px] text-[#555]">
          <svg width="19" height="21" viewBox="0 0 19 21" fill="none">
            <path d="M5 9V6c0-6 9-6 9 0v3" stroke="#e21f26" strokeWidth="2.500" />
            <rect y="8" width="19" height="13" rx="1" fill="#e21f26" />
            <rect x="8.500" y="12" width="2" height="5" fill="#fff" />
          </svg>
          <span className="ml-[11px] font-bold">Read-Only:</span>
          <span className="ml-[33px]">Document limit has been reached</span>
          <div className="ml-[24px] h-full w-[1.500px] bg-[#d8d8d8]" />
          <span className="ml-[20px] text-[#0f8ec9]">My Editable Documents</span>
        </div>
        <Browser />
        <Comments />
        <Palette />
        <NavBar />
      </div>
      <Timeline />
    </div>
  );
}
